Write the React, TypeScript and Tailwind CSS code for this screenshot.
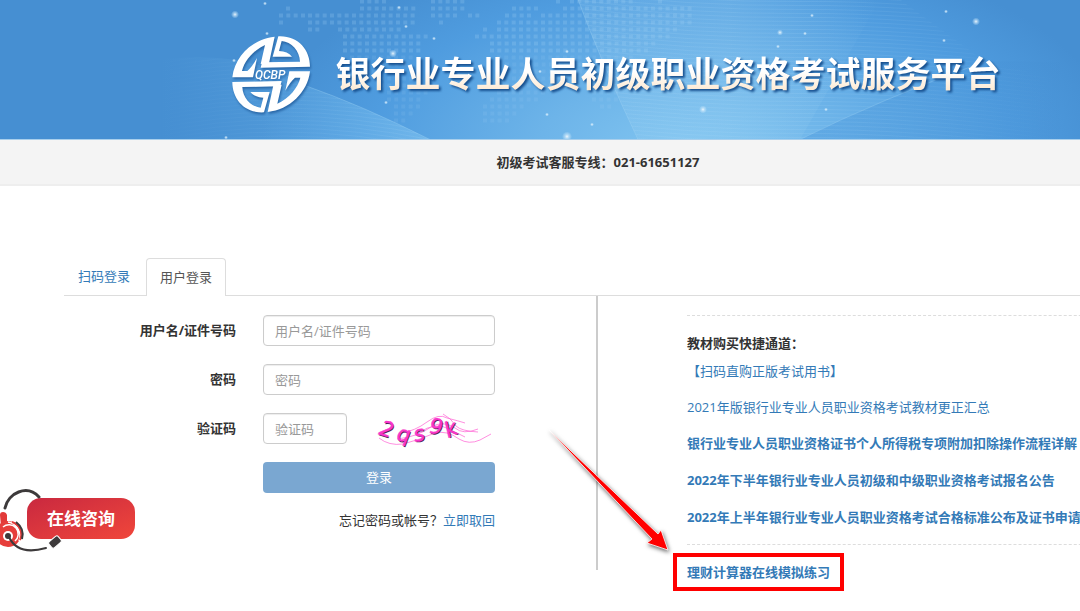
import React from 'react';

// [y, first x, number of squares] for the dotted world map behind the title
const MAP_ROWS: [number, number, number][] = [
  [0, 360, 4], [0, 431, 5], [0, 556, 1], [0, 570, 9], [0, 658, 1],
  [7, 286, 1], [7, 360, 8], [7, 431, 5], [7, 512, 4], [7, 563, 18],
  [14, 279, 4], [14, 308, 15], [14, 431, 4], [14, 468, 2], [14, 505, 4], [14, 541, 21],
  [21, 279, 1], [21, 308, 15], [21, 439, 1], [21, 497, 27],
  [28, 308, 2], [28, 338, 9], [28, 483, 1], [28, 497, 25],
  [35, 343, 12], [35, 475, 27],
  [42, 343, 11], [42, 490, 23],
  [49, 343, 11], [49, 490, 22],
  [56, 350, 9], [56, 497, 19],
  [63, 358, 7], [63, 505, 14],
  [70, 372, 6], [70, 505, 12],
  [77, 380, 6], [77, 512, 8], [77, 592, 4],
  [84, 380, 7], [84, 505, 7], [84, 592, 3],
  [91, 387, 6], [91, 497, 7], [91, 592, 4],
  [98, 387, 5], [98, 490, 7], [98, 592, 4],
  [105, 394, 4], [105, 483, 6], [105, 600, 2],
  [112, 394, 3], [112, 483, 5],
  [119, 394, 2], [119, 483, 4],
];

const SPARKS: [number, number, number][] = [
  [235, 15, 2], [265, 4, 0], [267, 34, 0], [234, 61, 0], [393, 54, 2], [406, 27, 0],
  [434, 39, 0], [399, 8, 0], [386, 103, 0], [226, 138, 0], [547, 115, 0], [567, 137, 3],
  [592, 125, 0], [567, 52, 0], [540, 72, 0], [703, 110, 2], [778, 47, 0], [780, 33, 1],
  [805, 34, 0], [812, 16, 0], [826, 110, 0], [944, 41, 0], [946, 12, 0], [976, 22, 2],
];

const WAVES = Array.from({ length: 40 }, (_, i) => i * 4);

const BannerBackdrop = () => (
  <svg className="absolute inset-0 h-full w-full" viewBox="0 0 1196 140" preserveAspectRatio="xMidYMid slice" aria-hidden="true">
    <defs>
      <radialGradient id="glow" gradientUnits="userSpaceOnUse" cx="0" cy="0" r="1" gradientTransform="translate(690 150) scale(430 210)">
        <stop offset="0" stopColor="#82c6f1" />
        <stop offset="0.35" stopColor="#6db4e9" />
        <stop offset="0.75" stopColor="#4f9cdf" />
        <stop offset="1" stopColor="#468fd2" />
      </radialGradient>
      <linearGradient id="leftFan" x1="0" x2="1">
        <stop offset="0" stopColor="#5ba9e6" stopOpacity="0" />
        <stop offset="1" stopColor="#80c3f0" stopOpacity="0.6" />
      </linearGradient>
      <linearGradient id="midFan" x1="0" x2="1">
        <stop offset="0" stopColor="#9ad1f3" stopOpacity="0.2" />
        <stop offset="0.5" stopColor="#9ad1f3" stopOpacity="0.3" />
        <stop offset="1" stopColor="#9ad1f3" stopOpacity="0" />
      </linearGradient>
      <linearGradient id="rightFan" x1="0" x2="1">
        <stop offset="0" stopColor="#4695dc" stopOpacity="0.4" />
        <stop offset="1" stopColor="#468fd2" stopOpacity="0.2" />
      </linearGradient>
      <linearGradient id="waveLine" gradientUnits="userSpaceOnUse" x1="150" x2="1060" y1="0" y2="0">
        <stop offset="0" stopColor="#c2e4f9" stopOpacity="0" />
        <stop offset="0.3" stopColor="#c2e4f9" stopOpacity="0.14" />
        <stop offset="0.75" stopColor="#c2e4f9" stopOpacity="0.14" />
        <stop offset="1" stopColor="#c2e4f9" stopOpacity="0" />
      </linearGradient>
      <radialGradient id="spark">
        <stop offset="0" stopColor="#fff" stopOpacity="0.9" />
        <stop offset="0.4" stopColor="#d5edfc" stopOpacity="0.6" />
        <stop offset="1" stopColor="#d5edfc" stopOpacity="0" />
      </radialGradient>
      <clipPath id="fans">
        <path d="M150 60Q250 50 305 86Q360 105 430 140H150ZM578 0Q600 60 638 140H800Q880 100 985 62L900 0ZM800 140Q880 100 985 62L1060 80V140Z" />
      </clipPath>
    </defs>
    <rect width="1196" height="140" fill="#468fd2" />
    <rect width="1196" height="140" fill="url(#glow)" />
    <path d="M160 60Q250 50 305 86Q360 105 430 140H160Z" fill="url(#leftFan)" />
    <path d="M578 0Q600 60 638 140H800L880 0Z" fill="url(#midFan)" />
    <path d="M800 140Q880 100 985 62H1060V140Z" fill="url(#rightFan)" />
    <path d="M305 86Q360 105 430 140M578 0Q600 60 638 140M800 140Q880 100 985 62" fill="none" stroke="#a6d7f5" strokeOpacity="0.3" />
    <g clipPath="url(#fans)" fill="none" stroke="url(#waveLine)" strokeWidth="0.8">
      {WAVES.map((y) => (
        <path key={y} d={`M150 ${y + 10}Q280 ${y - 18} 430 ${y + 12}M570 ${y - 20}Q690 ${y - 5} 800 ${y - 6}T1060 ${y + 12}`} />
      ))}
    </g>
    {MAP_ROWS.map(([y, x, count]) => (
      <path
        key={`${y}-${x}`}
        d={`M${x} ${y + 2}h${count * 7.33}`}
        stroke="#a9d6f5"
        strokeWidth="4"
        strokeDasharray="4 3.33"
        strokeOpacity={y > 54 ? 0.12 : 0.22}
      />
    ))}
    {SPARKS.map(([x, y, r]) => (
      <circle key={`${x}-${y}`} cx={x} cy={y} r={r + 2} fill="url(#spark)" />
    ))}
  </svg>
);

const QcbpLogo = () => (
  <svg className="h-20 w-20 shrink-0 drop-shadow-[1px_2px_1px_#2a68a8]" viewBox="94 98 240 240" role="img" aria-label="QCBP">
    <g fill="#fff">
      <path id="leaf" d="M98 228C105 165 160 112 225 106L208 186L183 188L196 131C160 147 134 180 127 209L143 209Q158 196 172 170L160 228Z" />
      <path id="hook" d="M236 105C295 102 331 145 331 196L183 199L187 183L301 181C300 148 275 122 246 119L238 149Q264 150 277 166L219 166Z" />
      <use href="#leaf" transform="rotate(180 214.500 219)" />
      <use href="#hook" transform="rotate(180 214.500 219)" />
      <text x="166" y="232" fontSize="36" fontWeight="500" fontStyle="italic" fontFamily="Roboto, sans-serif">QCBP</text>
    </g>
  </svg>
);

const Captcha = () => (
  <svg className="h-10 w-32" viewBox="4 0 128 40" role="img" aria-label="验证码图片">
    <g fill="none" stroke="#ff5fd2" strokeWidth="0.7">
      <path d="M16 29Q26 37 40 35Q56 31 72 24Q84 21 96 30Q106 36 117 31L128 25" />
      <path d="M38 24Q52 22 64 13Q76 4 84 9Q96 12 102 14" />
      <path d="M34 30Q54 28 68 18Q80 11 92 19Q100 26 115 20" />
      <path d="M80 5Q88 9 93 17Q98 22 115 23" />
      <path d="M56 24Q72 12 86 20L102 28" />
    </g>
    <g fontFamily="'DejaVu Sans', sans-serif" fontSize="21" fontStyle="italic">
      {[
        { char: '2', x: 15, y: 25, turn: 18 },
        { char: 'q', x: 33, y: 31, turn: 10 },
        { char: 's', x: 52, y: 33, turn: -12 },
        { char: '9', x: 66, y: 24, turn: 5 },
        { char: 'k', x: 85, y: 29, turn: -24 },
      ].map(({ char, x, y, turn }) => (
        <g key={char} transform={`rotate(${turn} ${x} ${y})`}>
          <text x={x + 1} y={y + 1} fill="#4a2358" aria-hidden="true">{char}</text>
          <text x={x} y={y} fill="#f935ca" stroke="#f935ca" strokeWidth="0.4">{char}</text>
        </g>
      ))}
    </g>
  </svg>
);

const Headset = () => (
  <svg className="absolute left-0 top-0 h-16 w-16" viewBox="0 0 64 64" fill="none" aria-hidden="true">
    <path d="M5 20C8 5 27 -4 39 9" stroke="#3d3a3b" strokeWidth="3" strokeLinecap="round" />
    <path d="M0 27q0-3 3-3t4 3v11H1z" fill="#e23a39" />
    <circle cx="8" cy="46" r="13" fill="#e63e3b" />
    <path d="M3 39a9 9 0 0 1 12 14M8 34a14 14 0 0 1 11 19" stroke="#fff" strokeWidth="1.500" />
    <path d="M12 34a13 13 0 0 1 8 18" stroke="#e23a39" strokeWidth="2" />
    <path d="M16 34q9 7 6 17" stroke="#3d3a3b" strokeWidth="2" />
    <circle cx="8" cy="48" r="5" fill="#fff" />
    <circle cx="8" cy="48" r="3" fill="#3d3a3b" />
    <path d="M9 49C16 64 32 64 46 60" stroke="#3d3a3b" strokeWidth="2" strokeLinecap="round" />
    <rect x="49" y="50" width="12" height="8" rx="2" fill="#3d3a3b" stroke="#fff" transform="rotate(-40 55 54)" />
  </svg>
);

const Arrow = () => (
  <svg className="pointer-events-none absolute left-[484px] top-[168px] h-32 w-32 drop-shadow-[1px_2px_2px_#00000099]" viewBox="0 0 128 128" aria-hidden="true">
    <path d="M1 4L110 108L113 104L120 124L99 117L104 113Z" fill="#f00" stroke="#fff" strokeWidth="0.8" />
  </svg>
);

interface FieldProps {
  id: string;
  label: string;
  type?: string;
  narrow?: boolean;
  children?: React.ReactNode;
}

const Field = ({ id, label, type = 'text', narrow, children }: FieldProps) => (
  <div className="flex items-center">
    <label htmlFor={id} className="w-[172px] text-right font-bold">{label}</label>
    <div className="ml-[27px] flex h-[31px] w-[232px] items-center justify-between">
      <input
        id={id}
        type={type}
        placeholder={label}
        className={`h-[31px] rounded border border-[#ccc] bg-white px-[11px] shadow-[inset_0_1px_1px_#00000013] outline-none placeholder:text-[#999] focus:border-[#66afe9] ${narrow ? 'w-[84px]' : 'w-full'}`}
      />
      {children}
    </div>
  </div>
);

const NOTICES = [
  '银行业专业人员职业资格证书个人所得税专项附加扣除操作流程详解',
  '2022年下半年银行业专业人员初级和中级职业资格考试报名公告',
  '2022年上半年银行业专业人员职业资格考试合格标准公布及证书申请的',
];

const App: React.FC = () => (
  <div className="min-h-screen overflow-hidden bg-white font-['Open_Sans','Noto_Sans_CJK_SC',sans-serif] text-[13px] text-[#333]">
    <div className="min-w-[1196px]">
      <header className="relative flex h-[140px] items-center justify-center border-b border-[#a9cfec] pt-2 pl-9">
        <BannerBackdrop />
        <div className="relative flex items-center gap-6">
          <QcbpLogo />
          <h1 className="bg-gradient-to-b from-white from-45% to-[#fde8cf] to-80% bg-clip-text text-[35px] leading-[60px] font-bold whitespace-nowrap text-transparent drop-shadow-[2px_2px_1px_#17508f]">
            银行业专业人员初级职业资格考试服务平台
          </h1>
        </div>
      </header>

      <div className="border-b-2 border-[#eee] bg-[#f4f4f4] text-center leading-[44px] font-bold">
        初级考试客服专线：021-61651127
      </div>

      <main className="relative mx-16 mt-[72px]">
        <div role="tablist" className="flex h-[38px] border-b border-[#ddd]">
          <button type="button" role="tab" aria-selected="false" className="mr-0.5 h-[38px] px-[14px] text-[#337ab7]">
            扫码登录
          </button>
          <button type="button" role="tab" aria-selected="true" className="h-[38px] rounded-t border border-b-0 border-[#ddd] bg-white px-[13px] text-[#555]">
            用户登录
          </button>
        </div>

        <div className="flex">
          <form className="h-[274px] w-1/2 border-r-2 border-[#ccc] pt-[19px]" onSubmit={(e) => e.preventDefault()}>
            <div className="flex flex-col gap-[18px]">
              <Field id="username" label="用户名/证件号码" />
              <Field id="password" label="密码" type="password" />
              <Field id="code" label="验证码" narrow>
                <Captcha />
              </Field>
              <div className="ml-[199px] w-[232px]">
                <button type="submit" className="h-[31px] w-full rounded bg-[#7aa7d1] text-white">登录</button>
                <p className="mt-[17px] text-right leading-5 whitespace-nowrap">
                  忘记密码或帐号？<a href="#reset" className="text-[#337ab7]">立即取回</a>
                </p>
              </div>
            </div>
          </form>

          <section className="w-1/2 pt-[19px] pl-[75px] whitespace-nowrap">
            <div className="ml-[14px] border-y border-dashed border-[#ddd] pt-[13px] pb-2">
              <h2 className="leading-7 font-bold">教材购买快捷通道：</h2>
              <a href="#books" className="block leading-7 text-[#337ab7]">【扫码直购正版考试用书】</a>
              <a href="#errata" className="mt-1 block leading-9 text-[#337ab7]">
                2021年版银行业专业人员职业资格考试教材更正汇总
              </a>
              {NOTICES.map((notice) => (
                <a key={notice} href="#notice" className="block leading-[37px] font-bold text-[#337ab7]">{notice}</a>
              ))}
            </div>
            <a href="#calculator" className="mt-2 inline-block border-4 border-[#f00] px-[10px] leading-[30px] font-bold text-[#337ab7]">
              理财计算器在线模拟练习
            </a>
          </section>
        </div>
        <Arrow />
      </main>
    </div>

    <aside className="fixed left-0 top-[488px] h-16 w-[135px]">
      <button type="button" className="absolute top-[10px] right-0 h-[41px] w-[108px] rounded-[14px] bg-gradient-to-br from-[#c9283f] to-[#f0463a] text-[17px] font-bold text-white">
        在线咨询
      </button>
      <Headset />
    </aside>
  </div>
);

export default App;
